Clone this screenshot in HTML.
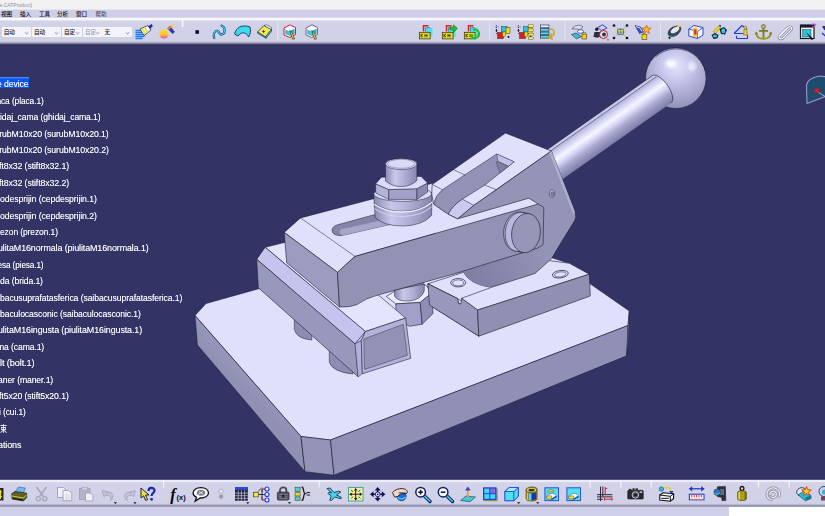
<!DOCTYPE html>
<html><head><meta charset="utf-8"><title>CATIA</title>
<style>
html,body{margin:0;padding:0;}
body{width:825px;height:516px;overflow:hidden;position:relative;background:#333366;font-family:"Liberation Sans","Noto Sans CJK SC",sans-serif;}
.abs{position:absolute;}
#title{left:0;top:0;width:825px;height:9.4px;background:#F2F2F2;}
#title span{position:absolute;left:-0.5px;top:1.8px;font-size:5px;line-height:6px;color:#8e8e98;white-space:nowrap;}
#menu{left:0;top:9px;width:825px;height:10px;background:linear-gradient(#F2F2F2 0,#E0E0EE 0.6px,#CECEE6 1.2px,#CECEE6 8.3px,#F0F2FA 9px,#FFFFFF 10px);}
#menu span{position:absolute;top:1px;font-size:5.6px;line-height:8px;color:#101020;font-weight:500;white-space:nowrap;}
#tb1{left:0;top:19px;width:825px;height:27px;background:linear-gradient(#FFFFFF 0,#F4F6FC 0.8px,#DADAEC 1.8px,#D1D1E7 3px,#D0D0E6 21.8px,#C0C0DC 22.8px,#A4A4B4 24px,#54547C 25px,#2C2C5C 26px,#333366 27px);}
.cb{position:absolute;top:27px;height:10px;background:#F3F3FA;border-radius:1px;}
.cb span{position:absolute;left:2px;top:1.5px;font-size:5.6px;line-height:7px;color:#151528;font-weight:500;white-space:nowrap;}
.cb i{position:absolute;right:2.5px;top:3.5px;width:2.2px;height:2.2px;border-right:0.6px solid #b0b0c4;border-bottom:0.6px solid #b0b0c4;transform:rotate(45deg);}
#tb2{left:0;top:479px;width:825px;height:28px;background:linear-gradient(#333366 0,#333366 0.4px,#E8E8F6 1px,#F4F4FC 2.2px,#D6D6EA 3.4px,#D2D2E8 5px,#D0D0E6 24.4px,#BCBCD4 25.4px,#9696B0 26.5px,#8A8AA8 27.3px,#D0D0E8 28px);}
#status{left:0;top:507px;width:825px;height:9px;background:#D0D0E8;}
#inp{left:729.2px;top:507.4px;width:96px;height:9px;background:#FFFFFF;}
#tree div[id]{position:absolute;left:0;white-space:nowrap;color:#fff;font-size:9.3px;line-height:12px;letter-spacing:-0.12px;text-shadow:0 0 0.5px rgba(255,255,255,0.55);}
#tree b{position:absolute;right:100%;top:0;font-weight:normal;}
svg{position:absolute;left:0;top:0;}
</style></head><body>
<svg width="825" height="516" viewBox="0 0 825 516">
<defs>
<linearGradient id="rod" x1="0" y1="0" x2="0" y2="1">
<stop offset="0" stop-color="#c4c4e8"/><stop offset="0.09" stop-color="#c8c8ec"/><stop offset="0.1" stop-color="#b4b4dc"/><stop offset="0.22" stop-color="#d0d0f2"/><stop offset="0.4" stop-color="#f6f6ff"/><stop offset="0.52" stop-color="#dcdcf8"/><stop offset="0.72" stop-color="#a8a8d0"/><stop offset="1" stop-color="#7c7ca6"/>
</linearGradient>
<radialGradient id="ball" cx="0.5" cy="0.3" r="0.78">
<stop offset="0" stop-color="#e4e4fb"/><stop offset="0.3" stop-color="#c8c8ec"/><stop offset="0.65" stop-color="#a8a8d0"/><stop offset="1" stop-color="#8686ae"/>
</radialGradient>
<linearGradient id="cylv" x1="0" y1="0" x2="1" y2="0">
<stop offset="0" stop-color="#8a8ab2"/><stop offset="0.3" stop-color="#c8c8ea"/><stop offset="0.55" stop-color="#b4b4da"/><stop offset="1" stop-color="#8686ae"/>
</linearGradient>
<linearGradient id="camlow" gradientUnits="userSpaceOnUse" x1="470" y1="285" x2="545" y2="245"><stop offset="0" stop-color="#7E7EA4"/><stop offset="0.55" stop-color="#8A8AAE"/><stop offset="1" stop-color="#9494B6"/></linearGradient>
<linearGradient id="lface" gradientUnits="userSpaceOnUse" x1="260" y1="360" x2="235" y2="385"><stop offset="0" stop-color="#9C9CC0"/><stop offset="1" stop-color="#9090B4"/></linearGradient>
<filter id="bl" x="-50%" y="-50%" width="200%" height="200%"><feGaussianBlur stdDeviation="1.6"/></filter>
</defs>
<rect x="0" y="0" width="825" height="516" fill="#333366"/>
<polygon points="195.0,315.5 206.0,303.5 500.0,221.0 629.3,311.0 628.0,325.5 330.5,440.0 301.0,436.5" fill="#E0E0FD" stroke="#1c1c30" stroke-width="0.6" stroke-linejoin="round" />
<polygon points="195.0,315.5 301.0,436.5 305.0,471.7 197.4,345.0" fill="url(#lface)" stroke="#1c1c30" stroke-width="0.6" stroke-linejoin="round" />
<polygon points="301.0,436.5 330.5,440.0 334.0,475.2 305.0,471.7" fill="#9494B8" stroke="#1c1c30" stroke-width="0.6" stroke-linejoin="round" />
<polygon points="330.5,440.0 628.0,325.5 626.7,355.8 334.0,475.2" fill="#9090B6" stroke="#1c1c30" stroke-width="0.6" stroke-linejoin="round" />
<polygon points="629.3,311.0 628.0,325.5 626.7,355.8 628.3,340.0" fill="#8A8AB2" stroke="#1c1c30" stroke-width="0.4" stroke-linejoin="round" />
<polygon points="427.9,283.8 462.8,272.5 549.3,257.0 569.4,263.3 589.4,275.1 477.6,310.8 457.5,298.6" fill="#E0E0FD" stroke="#1c1c30" stroke-width="0.6" stroke-linejoin="round" />
<polygon points="427.9,283.8 457.5,298.6 458.7,303.9 461.0,303.9 478.8,336.2 429.5,305.0" fill="#9898BC" stroke="#1c1c30" stroke-width="0.6" stroke-linejoin="round" />
<ellipse cx="458.2" cy="282.7" rx="7.5" ry="4.2" fill="none" stroke="#1c1c30" stroke-width="0.7"/>
<ellipse cx="458.2" cy="282.9" rx="5.6" ry="3.0" fill="none" stroke="#1c1c30" stroke-width="0.5"/>
<polygon points="394.4,285.0 424.2,280.0 424.2,300.0 394.4,303.0" fill="url(#cylv)" stroke="none" stroke-width="0.6" stroke-linejoin="round" />
<polygon points="386.3,296.4 395.8,303.9 420.2,302.5 431.7,293.0 425.6,284.9 400.0,288.0" fill="#ECECFF" stroke="#1c1c30" stroke-width="0.6" stroke-linejoin="round" />
<path d="M394.5,296 Q397,301.5 409,301 Q421,300 424.3,291 L424.3,284 L394.5,290 Z" fill="url(#cylv)" stroke="#1c1c30" stroke-width="0.5"/>
<polygon points="395.8,303.9 420.2,302.5 422.2,324.2 409.3,326.3 396.0,318.0" fill="#A0A0C8" stroke="#1c1c30" stroke-width="0.6" stroke-linejoin="round" />
<polygon points="420.2,302.5 431.7,293.0 433.0,313.4 422.2,324.2" fill="#8E8EB6" stroke="#1c1c30" stroke-width="0.6" stroke-linejoin="round" />
<path d="M294.3,316 L294.3,329.5 Q297,339 311.8,340 L311.8,330 Z" fill="#8C8CB4" stroke="#1c1c30" stroke-width="0.5"/>
<path d="M329.3,350 L329.3,362.4 Q333,372 353,374 L353,368 Z" fill="#8C8CB4" stroke="#1c1c30" stroke-width="0.5"/>
<polygon points="265.2,247.3 309.3,236.2 405.6,318.1 365.4,331.5" fill="#E4E4FE" stroke="#1c1c30" stroke-width="0.6" stroke-linejoin="round" />
<polygon points="256.7,259.3 265.2,247.3 365.4,331.5 355.1,343.9" fill="#C4C4EE" stroke="#1c1c30" stroke-width="0.6" stroke-linejoin="round" />
<polygon points="256.7,259.3 355.1,343.9 358.2,376.8 258.3,287.7" fill="#9898BC" stroke="#1c1c30" stroke-width="0.6" stroke-linejoin="round" />
<polygon points="355.1,343.9 365.4,331.5 361.3,340.5" fill="#C4C4EA" stroke="#1c1c30" stroke-width="0.4" stroke-linejoin="round" />
<polygon points="355.1,343.9 361.3,340.5 362.3,373.8 358.2,376.8" fill="#B0B0D8" stroke="#1c1c30" stroke-width="0.4" stroke-linejoin="round" />
<polygon points="365.4,331.5 405.6,318.1 410.7,358.3 362.3,373.8 361.3,340.5" fill="#B2B2DA" stroke="#1c1c30" stroke-width="0.6" stroke-linejoin="round" />
<polygon points="363.8,339.0 403.3,324.3 407.3,355.3 364.5,369.5" fill="#9292B4" stroke="#1c1c30" stroke-width="0.4" stroke-linejoin="round" />
<circle cx="675.8" cy="78.2" r="30.3" fill="url(#ball)" stroke="#1c1c30" stroke-width="0.6"/>
<path d="M655.7,57 A30.3,30.3 0 0 1 705.5,71.5" fill="none" stroke="#1c1c30" stroke-width="0.5"/>
<ellipse cx="671" cy="63.5" rx="5.5" ry="4" fill="#ffffff" opacity="0.85" filter="url(#bl)"/>
<ellipse cx="692" cy="66.5" rx="4" ry="5" fill="#ffffff" opacity="0.6" filter="url(#bl)"/>
<g transform="translate(557.5,163.3) rotate(-35.1)"><path d="M-6,-17.2 L127.8,-17.2 A7,16.6 0 0 1 128,16 L-6,16 Z" fill="url(#rod)"/><path d="M-6,-17.2 L127.8,-17.2 A7,16.6 0 0 1 128,16" fill="none" stroke="#1c1c30" stroke-width="0.55"/><path d="M-6,-14.1 L130.5,-14.1" fill="none" stroke="#34344c" stroke-width="0.5"/></g>
<polygon points="284.2,232.4 300.5,217.9 432.2,183.3 528.8,198.2 538.3,204.0 355.0,256.4 337.5,272.3" fill="#E0E0FD" stroke="#1c1c30" stroke-width="0.6" stroke-linejoin="round" />
<polyline points="300.5,217.9 355.0,256.4" fill="none" stroke="#1c1c30" stroke-width="0.5" stroke-linejoin="round" stroke-linecap="round"/>
<polygon points="284.2,232.4 337.5,272.3 339.5,307.0 286.7,262.7" fill="#9C9CC0" stroke="#1c1c30" stroke-width="0.6" stroke-linejoin="round" />
<path d="M336.8,225 L376.8,214 L392,224 L342,235.5 Q333,236 332,231 Q332,226.5 336.8,225 Z" fill="#8484A8" stroke="#1c1c30" stroke-width="0.5"/>
<path d="M342,235.5 L392,224 L385,219.5 L340.5,229.5 Q338,232 342,235.5 Z" fill="#A6A6CA" stroke="none"/>
<path d="M505.5,133.1 L551.4,151 L496.3,189.7 L473.9,205.3 Q466,212 457.6,218.9 L448.1,214.2 L433.6,204 Q430.5,194 432.2,184.4 Z" fill="#E0E0FD" stroke="#1c1c30" stroke-width="0.6"/>
<path d="M496.7,154.1 L514.2,161.8 L484.8,185 L462.4,199.2 Q453,205 448.1,214.2 L433.6,204 Q435,196 442.4,189.8 L464.7,174.9 Z" fill="#9292B6" stroke="#1c1c30" stroke-width="0.5"/>
<polygon points="496.7,154.1 514.2,161.8 508.5,166.3 498.0,161.5" fill="#C2C2E8" stroke="#1c1c30" stroke-width="0.4" stroke-linejoin="round" />
<polygon points="496.0,162.0 498.0,161.5 508.5,166.3 500.0,173.0" fill="#7C7CA4" stroke="#1c1c30" stroke-width="0.3" stroke-linejoin="round" />
<path d="M462.4,199.2 L473.9,205.3 Q466,212 457.6,218.9 L448.1,214.2 Q453,205 462.4,199.2 Z" fill="#CACAF0" stroke="#1c1c30" stroke-width="0.5"/>
<polyline points="453.2,169.5 464.7,174.9" fill="none" stroke="#1c1c30" stroke-width="0.5" stroke-linejoin="round" stroke-linecap="round"/>
<polyline points="432.2,184.4 442.4,189.8" fill="none" stroke="#1c1c30" stroke-width="0.5" stroke-linejoin="round" stroke-linecap="round"/>
<polyline points="484.8,185.0 496.3,189.7" fill="none" stroke="#1c1c30" stroke-width="0.5" stroke-linejoin="round" stroke-linecap="round"/>
<path d="M551.4,151 L575,212 Q576.5,216.5 575,220 L549,262.2 L536,276 L489.2,287 Q470,284 463.7,272.4 L457.6,218.9 Q466,212 473.9,205.3 L496.3,189.7 Z" fill="#9494B6" stroke="#1c1c30" stroke-width="0.6"/>
<path d="M463.7,272.4 Q470,284 489.2,287 L536,276 L549,262.2 L560,243 L543,244.5 L537.7,248.1 L450,275.1 Z" fill="url(#camlow)" stroke="none"/>
<polygon points="551.4,151.0 575.0,212.0 573.3,214.5 549.3,153.0" fill="#AEAED0" stroke="none" stroke-width="0.6" stroke-linejoin="round" />
<ellipse cx="552" cy="193.6" rx="2.8" ry="3.8" fill="#C0C0E6" stroke="#1c1c30" stroke-width="0.5" transform="rotate(10 552 193.6)"/>
<ellipse cx="552.3" cy="193.9" rx="1.5" ry="2.2" fill="#8888B0" stroke="#1c1c30" stroke-width="0.4" transform="rotate(10 552.3 193.9)"/>
<polygon points="461.5,298.3 491.6,287.3 535.0,273.5 549.3,260.6 569.4,263.3 589.4,274.2 477.6,310.0" fill="#E0E0FD" stroke="#1c1c30" stroke-width="0.6" stroke-linejoin="round" />
<polygon points="427.9,283.8 457.5,298.6 458.7,303.9 461.0,303.9 461.5,298.3 477.6,310.0 478.8,336.2 429.5,305.0" fill="#9898BC" stroke="#1c1c30" stroke-width="0.6" stroke-linejoin="round" />
<polygon points="477.6,310.0 589.4,274.2 590.3,296.0 478.8,336.2" fill="#9090B2" stroke="#1c1c30" stroke-width="0.6" stroke-linejoin="round" />
<ellipse cx="560.3" cy="274.2" rx="8" ry="3.7" fill="none" stroke="#1c1c30" stroke-width="0.7" transform="rotate(-8 560.3 274.2)"/>
<ellipse cx="560.3" cy="274.4" rx="5.8" ry="2.5" fill="none" stroke="#1c1c30" stroke-width="0.5" transform="rotate(-8 560.3 274.4)"/>
<polygon points="448.1,214.2 457.6,218.9 528.8,198.2 538.3,204.0 436.0,233.7 436.0,210.0" fill="#E0E0FD" stroke="none" stroke-width="0.6" stroke-linejoin="round" />
<polyline points="448.1,214.2 457.6,218.9 528.8,198.2 538.3,204.0" fill="none" stroke="#1c1c30" stroke-width="0.6" stroke-linejoin="round" stroke-linecap="round"/>
<path d="M337.5,272.3 L355,256.4 L538.3,204 L543.8,207.4 L543.1,244.7 L537.7,248.1 L450,275.1 L378,295 Q366,298 357,304.5 Q350,307.5 339.5,307 Z" fill="#9292B4" stroke="#1c1c30" stroke-width="0.6"/>
<g transform="rotate(8 522 232)"><path d="M518,212.5 A14.3,19.7 0 0 0 518,251.9 L526.1,252.2 L526.1,212.8 Z" fill="#C0C0E4" stroke="#1c1c30" stroke-width="0.6"/><ellipse cx="519.5" cy="232.3" rx="14.3" ry="19.7" fill="#B8B8DE" stroke="#1c1c30" stroke-width="0.6"/><ellipse cx="526.1" cy="232.5" rx="14.3" ry="19.7" fill="#9696B8" stroke="#1c1c30" stroke-width="0.6"/></g>
<path d="M374.2,204 L375.2,217.5 Q384,226.2 403,226 Q422,225.8 431.6,215.5 L431.8,202.5 Z" fill="url(#cylv)" stroke="#1c1c30" stroke-width="0.5"/>
<path d="M373.8,194.5 L374.2,203.5 Q386,211.5 403,211.3 Q421,211 431.8,201.5 L431.6,192.5 Z" fill="url(#cylv)" stroke="#1c1c30" stroke-width="0.5"/>
<path d="M374.2,204.2 Q386,212.3 403,212 Q421,211.6 431.8,202.2" fill="none" stroke="#ECECFC" stroke-width="1.3"/>
<path d="M374.4,208.6 Q386,216.8 403,216.5 Q421,216 431.7,206.8" fill="none" stroke="#D8D8F4" stroke-width="0.9"/>
<ellipse cx="402.7" cy="193.8" rx="28.9" ry="7.6" fill="#D8D8F8" stroke="#1c1c30" stroke-width="0.5"/>
<polygon points="375.7,183.8 388.8,189.6 388.8,199.4 375.7,192.9" fill="#B4B4DA" stroke="#1c1c30" stroke-width="0.5" stroke-linejoin="round" />
<polygon points="388.8,189.6 416.9,188.7 416.9,199.4 388.8,199.4" fill="#A2A2C8" stroke="#1c1c30" stroke-width="0.5" stroke-linejoin="round" />
<polygon points="416.9,188.7 427.6,183.0 427.6,192.0 416.9,199.4" fill="#8A8AAE" stroke="#1c1c30" stroke-width="0.5" stroke-linejoin="round" />
<polygon points="375.7,183.8 381.4,177.2 421.0,176.4 427.6,183.0 416.9,188.7 388.8,189.6" fill="#DCDCFA" stroke="#1c1c30" stroke-width="0.5" stroke-linejoin="round" />
<path d="M385.5,164 L385.5,181 Q392,186.5 401.2,186.5 Q411,186.5 416.9,180.5 L416.9,164 Z" fill="url(#cylv)" stroke="#1c1c30" stroke-width="0.5"/>
<ellipse cx="401.2" cy="164" rx="15.7" ry="5.6" fill="#DADAF8" stroke="#1c1c30" stroke-width="0.5"/>
<ellipse cx="401.2" cy="163.8" rx="13.6" ry="4.5" fill="none" stroke="#1c1c30" stroke-width="0.3"/>
<path d="M807,103.6 L806.5,85 Q808,78 820,76 L826,76.8 L826,96.3 Z" fill="#1F4C6C" stroke="#9A9AC8" stroke-width="1.1" stroke-linejoin="round"/>
<path d="M818.5,92.5 L826,97" stroke="#B8B8DC" stroke-width="0.9"/>
<rect x="814.6" y="88.5" width="4.1" height="4.1" fill="#f01020"/>
</svg>
<div class="abs" id="title"><span>e.CATProduct]</span></div>
<div class="abs" id="menu"><span style="left:1px">视图</span><span style="left:20px">插入</span><span style="left:39px">工具</span><span style="left:57px">分析</span><span style="left:76px">窗口</span><span style="left:95.5px;color:#555568">帮助</span></div>
<div class="abs" id="tb1"></div>
<div class="cb" style="left:1.7px;width:29.3px"><span style="">自动</span><i></i></div><div class="cb" style="left:32px;width:28.5px"><span style="">自动</span><i></i></div><div class="cb" style="left:62px;width:20px"><span style="">自定</span><i></i></div><div class="cb" style="left:83px;width:19px"><span style="color:#9a9ab0">自定</span><i></i></div><div class="cb" style="left:102.4px;width:29.6px"><span style="">无</span><i></i></div>
<div class="abs" id="tb2"></div>
<div class="abs" id="status"></div>
<div class="abs" id="inp"></div>
<svg width="825" height="516" viewBox="0 0 825 516">
<g transform="translate(135,24) scale(1.0)"><path d="M0.5,6.5h9M0.5,8.5h10M0.5,10.5h10M0.5,12.5h9M0.5,14.5h7" stroke="#2080f0" stroke-width="1.3"/>
<path d="M5,5 L13,1.5 L16,6 L9,11.5 Z" fill="#f8f8ff" stroke="#181830" stroke-width="0.7"/>
<path d="M7.2,4.6 L10.3,9.8 M9.6,3.4 L12.6,8.3" stroke="#e8e020" stroke-width="1.6"/>
<path d="M13.5,2.5 L16.5,0.3 L17.6,2.2 L15,4.6 Z" fill="#1030d0" stroke="#10103c" stroke-width="0.4"/></g>
<g transform="translate(159,24) scale(1.0)"><defs><linearGradient id="sp" x1="0" y1="0" x2="0" y2="1"><stop offset="0" stop-color="#ffe040"/><stop offset="0.6" stop-color="#ffc020"/><stop offset="1" stop-color="#e040e0"/></linearGradient></defs>
<circle cx="5" cy="10" r="4.6" fill="url(#sp)"/>
<path d="M8.5,4.5 L11,2 L15.5,8 L13.5,9.6 Z" fill="#2038c8" stroke="#10103c" stroke-width="0.4"/>
<path d="M8.5,4.5 L11,2 L12.2,3.5 L9.8,6 Z" fill="#f08030"/>
<path d="M11,1.8 L13.6,0.2 L14.8,2.2 L12.3,3.4 Z" fill="#f8d020"/></g>
<rect x="181.8" y="19" width="1.6" height="8" fill="#f6f6fc"/>
<rect x="195.4" y="30.2" width="3.6" height="3.6" fill="#10103c"/>
<g transform="translate(213,24.5) scale(1.0)"><path d="M1.2,13.5 C-0.5,7 4.5,4.5 6,8 C7.5,11.5 12,10 11.6,5.5 C11.4,3 10,1.6 8.6,1.2" fill="none" stroke="#183878" stroke-width="2.2" stroke-linecap="round"/>
<path d="M1.2,13.5 C-0.5,7 4.5,4.5 6,8 C7.5,11.5 12,10 11.6,5.5 C11.4,3 10,1.6 8.6,1.2" fill="none" stroke="#38d8f0" stroke-width="1.1" stroke-linecap="round"/></g>
<g transform="translate(234,24.5) scale(1.0)"><path d="M0.6,9.5 C2,3 8,-0.5 16,2.5 C17,6 16.5,9.5 14.5,12.5 C13,8.5 8,6 4,11.5 Z" fill="#38dcec" stroke="#183060" stroke-width="0.9" stroke-linejoin="round"/></g>
<g transform="translate(257,24.5) scale(1.0)"><path d="M0.5,7.5 L7,1 L14.5,5 L8.5,12.5 Z" fill="#f0e850" stroke="#202030" stroke-width="0.7"/>
<path d="M7,1 L9.5,0.3 L14.5,3 L14.5,5 Z" fill="#f8f8ff" stroke="#202030" stroke-width="0.5"/>
<path d="M8.5,12.5 L14.5,5 L14.5,7 L9,13.8 Z" fill="#30c8d8" stroke="#202030" stroke-width="0.5"/>
<path d="M0.5,7.5 L8.5,12.5 L9,13.8 L0.8,9 Z" fill="#30c8d8" stroke="#202030" stroke-width="0.5"/>
<path d="M5,7 h3 M6.5,5.5 v3" stroke="#202030" stroke-width="0.7"/></g>
<line x1="277" y1="22" x2="277" y2="40" stroke="#c6c6dc" stroke-width="0.5"/><line x1="277.8" y1="22" x2="277.8" y2="40" stroke="#f0f0fa" stroke-width="0.8"/>
<g transform="translate(283,24) scale(1.0)"><path d="M1,4 L7,0.8 L12.5,3.5 L12.5,10.5 L6.5,13.5 L1,11 Z" fill="#f4f4fc" stroke="#d02030" stroke-width="1"/>
<path d="M2.2,5.5 L6.5,7.3 L6.5,12 L2.2,10 Z" fill="#30c8d8"/><path d="M6.5,7.3 L11.5,4.8 L11.5,9.5 L6.5,12 Z" fill="#28a8c0"/>
<path d="M6.8,6.5 L9.5,9 L11.5,15 L9.5,15.2 L8,10.5 Z" fill="#f0d040" stroke="#202030" stroke-width="0.6"/></g>
<g transform="translate(305,24) scale(1.0)"><path d="M1,4 L7,0.8 L12.5,3.5 L12.5,10.5 L6.5,13.5 L1,11 Z" fill="#f4f4fc" stroke="#806070" stroke-width="1"/>
<path d="M2.2,5.5 L6.5,7.3 L6.5,12 L2.2,10 Z" fill="#30c8d8"/><path d="M6.5,7.3 L11.5,4.8 L11.5,9.5 L6.5,12 Z" fill="#28a8c0"/>
<path d="M6.8,6.5 L9.5,9 L11.5,15 L9.5,15.2 L8,10.5 Z" fill="#f0d040" stroke="#202030" stroke-width="0.6"/></g>
<g transform="translate(419,24.5) scale(1.0)"><path d="M4.5,7 V1.2 H9.5" fill="none" stroke="#e02020" stroke-width="1.5"/>
<rect x="6.5" y="3.2" width="7" height="9" fill="#50e0f0"/><path d="M6.5,7 V3.2 H11" fill="none" stroke="#207080" stroke-width="0.7"/>
<rect x="0.3" y="7.8" width="10.8" height="6.6" fill="#e8d820" stroke="#303010" stroke-width="0.7"/>
<path d="M2,9.5 v3.2 M2,11 l2,-1.5 M2,11 l2,1.7 M6,9.5 v3.2 M8,9.5 v3.2 M6,11 h2" stroke="#303010" stroke-width="0.8" fill="none"/></g>
<g transform="translate(442,24.5) scale(1.0)"><path d="M4.5,7 V1.2 H9.5" fill="none" stroke="#e02020" stroke-width="1.5"/>
<rect x="6.5" y="3.2" width="7" height="9" fill="#50e0f0"/><path d="M6.5,7 V3.2 H11" fill="none" stroke="#207080" stroke-width="0.7"/>
<rect x="0.3" y="7.8" width="10.8" height="6.6" fill="#e8d820" stroke="#303010" stroke-width="0.7"/>
<path d="M2,9.5 v3.2 M2,11 l2,-1.5 M2,11 l2,1.7 M6,9.5 v3.2 M8,9.5 v3.2 M6,11 h2" stroke="#303010" stroke-width="0.8" fill="none"/><path d="M8,2.5 h3.5 v-2.2 l4,3.8 l-4,3.8 v-2.4 h-3.5 Z" fill="#20c030" stroke="#106018" stroke-width="0.5"/></g>
<g transform="translate(464,24.5) scale(1.0)"><path d="M4.5,7 V1.2 H9.5" fill="none" stroke="#e02020" stroke-width="1.5"/>
<rect x="6.5" y="3.2" width="7" height="9" fill="#50e0f0"/><path d="M6.5,7 V3.2 H11" fill="none" stroke="#207080" stroke-width="0.7"/>
<rect x="0.3" y="7.8" width="10.8" height="6.6" fill="#e8d820" stroke="#303010" stroke-width="0.7"/>
<path d="M2,9.5 v3.2 M2,11 l2,-1.5 M2,11 l2,1.7 M6,9.5 v3.2 M8,9.5 v3.2 M6,11 h2" stroke="#303010" stroke-width="0.8" fill="none"/><path d="M9,5.5 a4.2,4.2 0 1 1 -1.5,6.5" fill="none" stroke="#20c030" stroke-width="2.2"/><path d="M5.5,11 l4,-1 l-1,4 Z" fill="#20c030"/></g>
<line x1="488.5" y1="22" x2="488.5" y2="40" stroke="#c6c6dc" stroke-width="0.5"/><line x1="489.3" y1="22" x2="489.3" y2="40" stroke="#f0f0fa" stroke-width="0.8"/>
<g transform="translate(495.5,24) scale(1.0)"><path d="M1,1 v9 M0,3 h3" stroke="#202040" stroke-width="0.7" stroke-dasharray="1 1"/>
<rect x="6" y="2.5" width="5.5" height="5.5" fill="#30c0e0" stroke="#104060" stroke-width="0.5"/>
<rect x="10.5" y="3.5" width="4" height="6" fill="#e8d820" stroke="#504010" stroke-width="0.5"/>
<rect x="2" y="8.5" width="6" height="6" fill="#d02020" stroke="#601010" stroke-width="0.5"/>
<rect x="7" y="8" width="3.2" height="4.5" fill="#e8d820" stroke="#504010" stroke-width="0.4"/>
<circle cx="1" cy="6.5" r="0.9" fill="#101030"/><circle cx="13" cy="13" r="1" fill="#101030"/></g>
<g transform="translate(517.5,24) scale(1.0)"><path d="M1,1 v9 M0,3 h3" stroke="#202040" stroke-width="0.7" stroke-dasharray="1 1"/>
<rect x="6" y="2.5" width="5.5" height="5.5" fill="#30c0e0" stroke="#104060" stroke-width="0.5"/>
<rect x="10.5" y="3.5" width="4" height="6" fill="#e8d820" stroke="#504010" stroke-width="0.5"/>
<rect x="2" y="8.5" width="6" height="6" fill="#d02020" stroke="#601010" stroke-width="0.5"/>
<rect x="7" y="8" width="3.2" height="4.5" fill="#e8d820" stroke="#504010" stroke-width="0.4"/>
<circle cx="1" cy="6.5" r="0.9" fill="#101030"/><circle cx="13" cy="13" r="1" fill="#101030"/><rect x="11" y="0.8" width="5" height="2.4" fill="#f0e870" stroke="#605010" stroke-width="0.4"/><rect x="11" y="5" width="5" height="2.4" fill="#f0e870" stroke="#605010" stroke-width="0.4"/><rect x="11" y="9.2" width="5" height="2.4" fill="#f0e870" stroke="#605010" stroke-width="0.4"/><rect x="11" y="13" width="5" height="2.2" fill="#f0e870" stroke="#605010" stroke-width="0.4"/></g>
<g transform="translate(540,24.5) scale(1.0)"><rect x="0.5" y="0.5" width="8.5" height="2.6" fill="#f4f4fc" stroke="#202040" stroke-width="0.6"/>
<rect x="0.5" y="4" width="8.5" height="2.6" fill="#50d8e8" stroke="#202040" stroke-width="0.6"/>
<rect x="0.5" y="7.5" width="8.5" height="2.6" fill="#50d8e8" stroke="#202040" stroke-width="0.6"/>
<rect x="0.5" y="11" width="8.5" height="2.6" fill="#50d8e8" stroke="#202040" stroke-width="0.6"/>
<path d="M10,4.5 c5,0 6,5.5 1,7.5 l0.3,-2 l-3,2.6 l3.6,1.8 l-0.3,-1.6" fill="none" stroke="#c8a818" stroke-width="1.5"/></g>
<line x1="564" y1="22" x2="564" y2="40" stroke="#c6c6dc" stroke-width="0.5"/><line x1="564.8" y1="22" x2="564.8" y2="40" stroke="#f0f0fa" stroke-width="0.8"/>
<g transform="translate(571,24) scale(1.0)"><path d="M1,5 C3,1 9,0 12,3 L8.5,6 C6,4.5 4,5 1,5 Z" fill="#d8d8e8" stroke="#404060" stroke-width="0.6"/>
<ellipse cx="9.5" cy="7.5" rx="3" ry="1.8" fill="#f8f8ff" stroke="#2040d0" stroke-width="0.8"/>
<path d="M0.5,10.5 L5,9 L10.5,12.5 L5.5,14.8 Z" fill="#40b8d8" stroke="#203050" stroke-width="0.6"/>
<rect x="11" y="10" width="4.6" height="5" fill="#e8d820" stroke="#504010" stroke-width="0.6"/><rect x="12" y="8.6" width="2.6" height="1.6" fill="#e8d820" stroke="#504010" stroke-width="0.4"/></g>
<g transform="translate(593.5,24) scale(1.0)"><path d="M4,3.5 L9,0.8 L13.5,4 L8,6.5 Z" fill="none" stroke="#2038d8" stroke-width="0.9"/>
<circle cx="3.2" cy="5.2" r="1.7" fill="#202030"/><path d="M1,8 h6 l1,5 h-8 Z" fill="#202030"/><circle cx="3.5" cy="11" r="2.8" fill="#303040"/>
<circle cx="10" cy="10.5" r="4" fill="#e8e8f4" stroke="#c01818" stroke-width="1"/><circle cx="10.5" cy="10.5" r="2" fill="#303050"/>
<path d="M13.5,15.5 h2 l-1,1.2 Z" fill="#101020"/></g>
<g transform="translate(612.5,24) scale(1.0)"><path d="M1.5,1.5 L14.5,14 M14.5,1.5 L1.5,14" stroke="#d8c818" stroke-width="1"/>
<circle cx="1.5" cy="1.5" r="1.3" fill="#101020"/><circle cx="14.5" cy="1.5" r="1.3" fill="#101020"/><circle cx="1.5" cy="14" r="1.3" fill="#101020"/><circle cx="14.5" cy="14" r="1.3" fill="#101020"/>
<rect x="5" y="5" width="6.2" height="5.6" rx="1.5" fill="#3088d0" stroke="#203050" stroke-width="0.5"/><circle cx="6.8" cy="6.8" r="1.2" fill="#e8d820"/><circle cx="9.6" cy="6.8" r="1.2" fill="#e8d820"/><circle cx="6.8" cy="9.2" r="1" fill="#e8d820"/><circle cx="9.6" cy="9.2" r="1" fill="#e8d820"/></g>
<g transform="translate(634.5,24) scale(1.0)"><path d="M0.5,1.5 L6,3 L9,8 L5,9.5 Z" fill="#2850d8" stroke="#202040" stroke-width="0.5"/><path d="M1.5,2.5 L5.5,4 L7.5,7.5" stroke="#f0f0ff" stroke-width="0.9" fill="none"/>
<path d="M12,1 l1.2,3 l3.3,0.2 l-2.6,2 l1,3.3 l-2.9,-1.9 l-2.9,1.9 l1,-3.3 l-2.6,-2 l3.3,-0.2 Z" fill="#f8c020" stroke="#e05818" stroke-width="0.8"/>
<rect x="7.5" y="10.5" width="4.8" height="4.8" fill="#e8d820" stroke="#504010" stroke-width="0.6"/><rect x="8.6" y="9.2" width="2.6" height="1.5" fill="#e8d820" stroke="#504010" stroke-width="0.4"/></g>
<line x1="659.5" y1="22" x2="659.5" y2="40" stroke="#c6c6dc" stroke-width="0.5"/><line x1="660.3" y1="22" x2="660.3" y2="40" stroke="#f0f0fa" stroke-width="0.8"/>
<g transform="translate(667,24) scale(1.0)"><ellipse cx="7.5" cy="7" rx="7.5" ry="4.6" transform="rotate(-32 7.5 7)" fill="#404858" />
<ellipse cx="8" cy="6" rx="5.2" ry="2.8" transform="rotate(-32 8 6)" fill="#e8e8f4" stroke="#202030" stroke-width="0.5"/>
<path d="M1,9.5 C2,14 8,13.5 12,9 C9,12 4,12.5 1,9.5 Z" fill="#20a0a0" stroke="#104848" stroke-width="0.6"/>
<circle cx="11.5" cy="2.2" r="1.3" fill="#f0e020"/><circle cx="2.5" cy="13.8" r="1.1" fill="#101020"/></g>
<g transform="translate(688,24) scale(1.0)"><path d="M0.8,5 L6,1.5 L15,3.5 L15,11 L9.5,14.5 L0.8,12 Z" fill="#f4f4fc" stroke="#2038c0" stroke-width="0.9"/>
<path d="M0.8,5 L9.5,7.5 L9.5,14.5 M9.5,7.5 L15,3.5" fill="none" stroke="#2038c0" stroke-width="0.8"/>
<rect x="5.2" y="3.8" width="4.2" height="8.8" fill="#f0c020"/><rect x="6.2" y="5.5" width="2.2" height="5" fill="#e02828"/></g>
<g transform="translate(711,24.5) scale(1.0)"><path d="M2,7 L8,1 L10,2.5 L4.5,9 Z" fill="#e8d820" stroke="#605010" stroke-width="0.4"/>
<path d="M8.5,4.5 L13,2.5 L16,5.5 L14,10 L10,9.5 Z" fill="#181828"/><ellipse cx="12.3" cy="6.3" rx="2" ry="2.6" fill="#30c8e0"/>
<path d="M0.5,10.5 L4,8.5 L7.5,10.5 L6.5,13.8 L2.5,14.5 Z" fill="#181828"/><ellipse cx="4" cy="11.5" rx="2.2" ry="1.6" fill="#30c8e0"/>
<circle cx="9" cy="1.2" r="1" fill="#2040d0"/></g>
<g transform="translate(733,24) scale(1.0)"><path d="M1,9.5 L9,1.5 L14,5.5 M1,9.5 L10.5,9.5 M3.5,14.5 h11 M3.5,11.8 v2.7 M14.5,11 v3.5" fill="none" stroke="#2038e0" stroke-width="1.1"/>
<circle cx="12.3" cy="3.6" r="1.5" fill="#e8d020" stroke="#504010" stroke-width="0.4"/><path d="M11,5.5 h2.8 l0.4,5.5 h-3.6 Z" fill="#e8d020" stroke="#504010" stroke-width="0.4"/></g>
<g transform="translate(755,24) scale(1.0)"><circle cx="8.5" cy="2.6" r="1.8" fill="none" stroke="#807818" stroke-width="1.2"/>
<path d="M8.5,4.5 V14 M4,6.8 h9" stroke="#807818" stroke-width="1.8"/>
<path d="M1,8.5 C1.5,14 6,15 8.5,14.5 C11,15 15.5,14 16,8.5" fill="none" stroke="#a09820" stroke-width="2"/>
<path d="M0,10.5 l1,-3 l2,2.3 Z M17,10.5 l-1,-3 l-2,2.3 Z" fill="#807818"/></g>
<g transform="translate(777,24) scale(1.0)"><path d="M2.5,12 L11,3.5 C13,1.5 16,4 14,6.2 L6,14 C3.5,16.3 0.3,13.5 2.8,11 L9.5,4.5" fill="none" stroke="#707088" stroke-width="2.4" stroke-linecap="round"/>
<path d="M2.5,12 L11,3.5 C13,1.5 16,4 14,6.2 L6,14 C3.5,16.3 0.3,13.5 2.8,11 L9.5,4.5" fill="none" stroke="#f8f8ff" stroke-width="1.2" stroke-linecap="round"/></g>
<g transform="translate(800,24) scale(1.0)"><rect x="0.5" y="1" width="13.5" height="13.5" fill="#f4f4fc" stroke="#181828" stroke-width="1.2"/><rect x="0.5" y="1" width="13.5" height="2.6" fill="#181828"/>
<rect x="2.5" y="5.5" width="8.5" height="7.5" fill="#30c0d0" stroke="#104858" stroke-width="0.5"/>
<path d="M6,8 L12.5,14 L13,15.8 L11,15.5 Z" fill="#181828"/><path d="M11,0.5 l3.5,-1 M12,2.6 l3.2,0.3" stroke="#e050d0" stroke-width="0.9"/><circle cx="15.2" cy="0.8" r="1" fill="#e050d0"/></g>
<g transform="translate(821.5,24) scale(1.0)"><path d="M1,3 C3,2 4,4 3,6 M0.5,9 L4,12" stroke="#2838c8" stroke-width="1.4" fill="none"/><circle cx="3" cy="3.5" r="1.6" fill="#303048"/></g>
<g transform="translate(0,487) scale(1.0)"><rect x="-3" y="1" width="6.5" height="12.5" fill="#282838"/><path d="M0.5,3 v9 M-1,5 h3 M-1,9.5 h3" stroke="#e8e020" stroke-width="1.2"/></g>
<g transform="translate(11,486.5) scale(1.0)"><path d="M4,5.5 L7.5,0.5 L14.5,1.5 L12,7 Z" fill="#70b8f0" stroke="#304878" stroke-width="0.5"/><path d="M0.8,7 L4,5 L15.5,6.5 L15.8,11 L12.5,14.5 L1,12.5 Z" fill="#606028" stroke="#181810" stroke-width="0.6"/><path d="M1,9.5 L12.5,11.5 L15.8,8.2" fill="none" stroke="#c8c850" stroke-width="1"/><path d="M2,12 L12,13.6" stroke="#181810" stroke-width="1.2"/></g>
<g transform="translate(35.5,486.5) scale(1.0)"><path d="M1,0.5 L8,10 M11,0.5 L4,10" stroke="#a4a4bc" stroke-width="1.5" fill="none"/><circle cx="2.8" cy="12.3" r="2.1" fill="none" stroke="#a4a4bc" stroke-width="1.3"/><circle cx="9.3" cy="12.3" r="2.1" fill="none" stroke="#a4a4bc" stroke-width="1.3"/></g>
<g transform="translate(57,487) scale(1.0)"><path d="M0.5,0.5 h6 l2.5,2.5 v7.5 h-8.5 Z" fill="#f0f0f8" stroke="#a4a4bc" stroke-width="1"/><path d="M6,3.5 h6 l2.8,2.8 v7.5 h-8.8 Z" fill="#f0f0f8" stroke="#a4a4bc" stroke-width="1"/><path d="M8,8 h5 M8,10 h5 M8,12 h5" stroke="#c4c4d4" stroke-width="0.6"/></g>
<g transform="translate(79,487) scale(1.0)"><rect x="0.5" y="1.5" width="10.5" height="11" fill="#b4b4c8" stroke="#a4a4bc" stroke-width="1"/><rect x="3" y="0.3" width="5.5" height="2.8" fill="#d0d0e0" stroke="#a4a4bc" stroke-width="0.7"/><path d="M6.5,6 h5 l2.5,2.5 v5.5 h-7.5 Z" fill="#f0f0f8" stroke="#a4a4bc" stroke-width="1"/></g>
<g transform="translate(101.8,487) scale(1.0)"><path d="M2,9.5 L0.5,3.5 L6.5,5 L4.7,6.5 C8,4 12,6 11,10 C10.5,12 9.5,13 8.5,13.5 C9.5,11 9,8.5 6,8.5 L4,8.2 Z" fill="#c4c4d8" stroke="#a4a4bc" stroke-width="0.9"/></g>
<path d="M113.80000000000001,502.2 h3.2 l-1.6,1.8 Z" fill="#101020"/>
<g transform="translate(135.8,487) scale(1.0)"><g transform="scale(-1,1)"><path d="M2,9.5 L0.5,3.5 L6.5,5 L4.7,6.5 C8,4 12,6 11,10 C10.5,12 9.5,13 8.5,13.5 C9.5,11 9,8.5 6,8.5 L4,8.2 Z" fill="#c4c4d8" stroke="#a4a4bc" stroke-width="0.9"/></g></g>
<path d="M133.4,502.2 h3.2 l-1.6,1.8 Z" fill="#101020"/>
<g transform="translate(140,487) scale(1.0)"><path d="M1,1 L1,11 L3.6,8.8 L5.6,13.5 L7.6,12.6 L5.6,8 L9,8 Z" fill="#f0e040" stroke="#101030" stroke-width="0.9"/><path d="M8.5,4 C8.5,0 14.5,0 14.5,3.6 C14.5,6 11.6,6.2 11.6,9" fill="none" stroke="#1828a8" stroke-width="2.2"/><circle cx="11.6" cy="12.3" r="1.4" fill="#1828a8"/></g>
<rect x="163" y="480.5" width="1.2" height="7" fill="#f6f6fc"/>
<text x="170.2" y="499.5" font-family="Liberation Serif,serif" font-style="italic" font-weight="bold" font-size="16.5" fill="#08080c">f</text><text x="176.6" y="499.8" font-family="Liberation Sans,sans-serif" font-weight="bold" font-size="7.4" fill="#08080c">(x)</text>
<g transform="translate(192.7,487) scale(1.0)"><path d="M8,0.6 C13,0.6 15.8,3 15.8,6 C15.8,9.2 12,11.2 7.5,11 L2.5,14.3 L3.8,10.3 C1.5,9.3 0.4,7.8 0.4,6 C0.4,3 3.5,0.6 8,0.6 Z" fill="#f8f8ff" stroke="#101018" stroke-width="1.3"/><ellipse cx="8.3" cy="5.8" rx="4.2" ry="3" fill="#80808c"/><path d="M6,7 l4.5,-2.6 M6.4,4.6 l3.8,2.6" stroke="#f0f0f8" stroke-width="0.8"/></g>
<g transform="translate(218,488) scale(1.0)"><rect x="0.3" y="0" width="5.6" height="12" rx="2.4" fill="#d0d0e0"/><circle cx="3.1" cy="3.2" r="2" fill="#e8e8f0" stroke="#a4a4bc" stroke-width="0.7"/><circle cx="3.1" cy="8.6" r="2.2" fill="#9c9cac"/></g>
<g transform="translate(235,487.3) scale(1.0)"><rect x="0" y="0" width="12.8" height="13.4" fill="#202038"/><rect x="0" y="0" width="12.8" height="2.6" fill="#2848e0"/><path d="M3.2,3 v10.4 M6.4,3 v10.4 M9.6,3 v10.4 M0,5.8 h12.8 M0,8.4 h12.8 M0,11 h12.8" stroke="#c8c8dc" stroke-width="0.7"/></g>
<path d="M246.20000000000002,502.2 h3.2 l-1.6,1.8 Z" fill="#101020"/>
<g transform="translate(253,486.5) scale(1.0)"><path d="M5,8 h4 M9,2.5 v11 M9,2.5 h3 M9,8 h3 M9,13.5 h3" stroke="#202038" stroke-width="0.9" fill="none"/><path d="M5,5 l4,-4" stroke="#202038" stroke-width="0.8"/><rect x="0.5" y="5.8" width="4.8" height="4.6" fill="#f0e050" stroke="#504810" stroke-width="0.7"/><circle cx="14" cy="2.5" r="2" fill="#f0f0ff" stroke="#2040e0" stroke-width="1.1"/><circle cx="14" cy="8" r="2" fill="#f0f0ff" stroke="#2040e0" stroke-width="1.1"/><circle cx="14" cy="13.5" r="2" fill="#f0f0ff" stroke="#2040e0" stroke-width="1.1"/><circle cx="9" cy="4.5" r="0.9" fill="#e02020"/><circle cx="9" cy="11.5" r="0.9" fill="#e02020"/></g>
<g transform="translate(276.8,486.5) scale(1.0)"><path d="M3.2,6 V3.8 C3.2,0 9.6,0 9.6,3.8 V6" fill="none" stroke="#484858" stroke-width="1.8"/><rect x="0.6" y="5.6" width="11.6" height="8" rx="1.2" fill="#585868" stroke="#202028" stroke-width="0.7"/><path d="M2.5,8 h8 M2.5,10 h8 M2.5,12 h8" stroke="#8c8c9c" stroke-width="0.6"/><circle cx="6.4" cy="9.6" r="1.3" fill="#181820"/></g>
<path d="M287.9,502.2 h3.2 l-1.6,1.8 Z" fill="#101020"/>
<g transform="translate(294.6,486.5) scale(1.0)"><rect x="0.5" y="0.8" width="5" height="4.2" fill="#40d0e0" stroke="#606018" stroke-width="0.7"/><rect x="0.5" y="6.2" width="5" height="3.2" fill="#e8e040" stroke="#606018" stroke-width="0.7"/><rect x="0.5" y="10.4" width="5" height="3.4" fill="#40d0e0" stroke="#606018" stroke-width="0.7"/><path d="M7,0.5 C10,0.5 8,6.5 10.5,7.2 C8,8 10,14 7,14" fill="none" stroke="#181828" stroke-width="1.3"/><path d="M12,6 h3.5 M12,8.5 h3.5" stroke="#181828" stroke-width="1"/></g>
<rect x="318.6" y="480.5" width="1.2" height="7" fill="#f6f6fc"/>
<g transform="translate(326,487) scale(1.0)"><path d="M1,1.5 L4,1 L8,5.5 L12.5,4.2 L14.8,5 L10.5,8 L15.2,10.2 L15,11.8 L8.5,10 L5.5,13.5 L3.8,13.2 L5.2,8.8 L2,6.5 L3,5.2 L5.5,6 Z" fill="#40d8e8" stroke="#183060" stroke-width="0.9"/></g>
<g transform="translate(348,487) scale(1.0)"><rect x="0.4" y="0.4" width="14.6" height="13.6" fill="#f4f0a0" stroke="#30a0a0" stroke-width="0.9"/><path d="M7.7,2 v10.4 M2.2,7.2 h11" stroke="#101018" stroke-width="0.9"/><path d="M7.7,1 l-1.7,2.4 h3.4 Z M7.7,13.4 l-1.7,-2.4 h3.4 Z M1.2,7.2 l2.4,-1.7 v3.4 Z M14.2,7.2 l-2.4,-1.7 v3.4 Z" fill="#101018"/><path d="M3,2.8 l2,2 M12.4,2.8 l-2,2 M3,11.6 l2,-2 M12.4,11.6 l-2,-2" stroke="#101018" stroke-width="0.8"/></g>
<g transform="translate(370,487) scale(1.0)"><path d="M7.7,0 l-3,3.6 h6 Z M7.7,14.6 l-3,-3.6 h6 Z M0,7.3 l3.6,-3 v6 Z M15.4,7.3 l-3.6,-3 v6 Z" fill="#101060"/><path d="M7.7,3 v8.6 M3,7.3 h9.4" stroke="#101060" stroke-width="1.6"/><circle cx="7.7" cy="7.3" r="2.4" fill="#f0f0ff" stroke="#101060" stroke-width="0.9"/><circle cx="7.7" cy="7.3" r="0.9" fill="#101060"/></g>
<g transform="translate(392,487) scale(1.0)"><circle cx="9.5" cy="9.2" r="4.6" fill="#2068e0" stroke="#102060" stroke-width="0.6"/><path d="M6,10.5 C8,12.5 11.5,12.5 13.5,10" stroke="#40d8f0" stroke-width="1.3" fill="none"/><path d="M0.5,5.5 C3,2.5 8,0.8 12.5,2 C15.5,3 16,5.5 14.5,6.5 L8.5,6.8 L5.5,9.5 L2.5,10 Z" fill="#f4d8c0" stroke="#181828" stroke-width="0.9"/><path d="M6.5,5.8 h7" stroke="#181828" stroke-width="0.7"/></g>
<g transform="translate(415,486.5) scale(1.0)"><path d="M9,9 L15,15" stroke="#102060" stroke-width="3.4" stroke-linecap="round"/><path d="M9.4,9.4 L14.8,14.8" stroke="#40c8e8" stroke-width="1.5" stroke-linecap="round"/><circle cx="5.6" cy="5.7" r="4.8" fill="#f8f8ff" stroke="#102060" stroke-width="1.5"/><path d="M3.3,5.7 h4.6" stroke="#101018" stroke-width="1.5"/><path d="M5.6,3.4 v4.6" stroke="#101018" stroke-width="1.5"/></g>
<g transform="translate(437.5,486.5) scale(1.0)"><path d="M9,9 L15,15" stroke="#102060" stroke-width="3.4" stroke-linecap="round"/><path d="M9.4,9.4 L14.8,14.8" stroke="#40c8e8" stroke-width="1.5" stroke-linecap="round"/><circle cx="5.6" cy="5.7" r="4.8" fill="#f8f8ff" stroke="#102060" stroke-width="1.5"/><path d="M3.3,5.7 h4.6" stroke="#101018" stroke-width="1.5"/></g>
<g transform="translate(460,486.5) scale(1.0)"><path d="M0.5,14 L6,9.5 L15.5,10.5 L10,15.2 Z" fill="#40c8e0" stroke="#185070" stroke-width="0.7"/><path d="M7.8,12 V3.5" stroke="#e8a020" stroke-width="1.8"/><path d="M7.8,0 l-2.8,4 h5.6 Z" fill="#2848e0"/></g>
<g transform="translate(483,487.3) scale(1.0)"><rect x="0" y="0" width="13.6" height="12.8" fill="#2040d8"/><rect x="1.3" y="1.3" width="5" height="4.6" fill="#40d8f0"/><rect x="7.3" y="1.3" width="5" height="4.6" fill="#8868e0"/><rect x="1.3" y="6.9" width="5" height="4.6" fill="#40d8f0"/><rect x="7.3" y="6.9" width="5" height="4.6" fill="#40d8f0"/><path d="M0.5,13.4 h13.6 v-12" stroke="#807018" stroke-width="0.8" fill="none"/></g>
<g transform="translate(504.3,487) scale(1.0)"><path d="M0.5,4.5 L5,0.5 L14,0.5 L14,9.5 L9.5,13.8 L0.5,13.8 Z" fill="#50e0f0" stroke="#2040e0" stroke-width="1"/><path d="M0.5,4.5 H9.5 V13.8 M9.5,4.5 L14,0.5" fill="none" stroke="#2040e0" stroke-width="0.9"/><path d="M0.5,4.5 L5,0.5 L14,0.5 L9.5,4.5 Z" fill="#a0f0f8" stroke="#2040e0" stroke-width="0.8"/></g>
<path d="M517.1,502.2 h3.2 l-1.6,1.8 Z" fill="#101020"/>
<g transform="translate(525.5,486.5) scale(1.0)"><path d="M0.8,3.5 V11.5 C0.8,15.3 11.4,15.3 11.4,11.5 V3.5 Z" fill="#1830c0" stroke="#807010" stroke-width="1.4"/><rect x="3.4" y="4" width="2.6" height="10" fill="#40d8f0"/><rect x="1.4" y="4" width="1.6" height="9.4" fill="#e8d020"/><ellipse cx="6.1" cy="3.5" rx="5.3" ry="2.7" fill="#e8e0a0" stroke="#807010" stroke-width="1.4"/><ellipse cx="6.1" cy="3.7" rx="3.2" ry="1.4" fill="#383820"/></g>
<path d="M536.1999999999999,502.2 h3.2 l-1.6,1.8 Z" fill="#101020"/>
<g transform="translate(544.4,487.3) scale(1.0)"><rect x="0.5" y="0.5" width="13.6" height="12.8" fill="#50e0f0" stroke="#3050d0" stroke-width="1"/><path d="M3,4.5 C5,1.5 9,2 9.5,4.5 C7,4 5,5 3,4.5 Z" fill="#f0e050" stroke="#605010" stroke-width="0.5"/><path d="M2,10 C3,6.5 8,5 10.5,7 L12,8.5 L7,11.8 Z" fill="#f8f8ff" stroke="#404060" stroke-width="0.5"/><path d="M2,10 C3.5,8 6,8 7.5,9 L7,11.8 L3,11.8 Z" fill="#f0d040" stroke="#605010" stroke-width="0.5"/><path d="M7,11.8 L12,8.5 L12.4,9.6 L7.5,12.8 Z" fill="#2040a0"/></g>
<g transform="translate(566.4,487.3) scale(1.0)"><rect x="0.5" y="0.5" width="13.6" height="12.8" fill="#50e0f0" stroke="#3050d0" stroke-width="1"/><path d="M2,10 C3,6.5 8,5 10.5,7 L12,8.5 L7,11.8 Z" fill="#f8f8ff" stroke="#404060" stroke-width="0.5"/><path d="M2,10 C3.5,8 6,8 7.5,9 L7,11.8 L3,11.8 Z" fill="#f0d040" stroke="#605010" stroke-width="0.5"/><path d="M7,11.8 L12,8.5 L12.4,9.6 L7.5,12.8 Z" fill="#2040a0"/></g>
<rect x="589.6" y="480.5" width="1.2" height="7" fill="#f6f6fc"/>
<g transform="translate(597,486.5) scale(1.0)"><path d="M3.5,0 V14.5 M5.8,0 V10 M0,8.2 H15.5 M0,10.4 H15.5 M0,12.8 h6" stroke="#282838" stroke-width="1"/><path d="M8.2,0.5 V8 M8.2,2 h2 M7.5,12.8 H15 M7.5,11.6 v2.4 M15,11.6 v2.4" stroke="#e02030" stroke-width="1.1"/></g>
<rect x="620.2" y="480.5" width="1.2" height="7" fill="#f6f6fc"/>
<g transform="translate(627.4,488) scale(1.0)"><rect x="0.3" y="2.3" width="15.6" height="8.8" rx="1" fill="#282830" stroke="#101018" stroke-width="0.5"/><rect x="5" y="0.3" width="5.6" height="2.6" fill="#383840"/><rect x="1.4" y="0.9" width="2.6" height="1.6" fill="#282830"/><circle cx="8" cy="6.9" r="3.3" fill="#585868" stroke="#c8c8d8" stroke-width="0.9"/><circle cx="8" cy="6.9" r="1.5" fill="#181820"/><rect x="12.2" y="3.4" width="2.6" height="1.5" fill="#d0d0e0"/><circle cx="7.8" cy="0.9" r="0.7" fill="#e8d020"/></g>
<rect x="650.6" y="480.5" width="1.2" height="7" fill="#f6f6fc"/>
<g transform="translate(658.8,486.5) scale(1.0)"><circle cx="2.6" cy="2.6" r="2.3" fill="#30b8d8" stroke="#105068" stroke-width="0.5"/><path d="M5.5,1.5 C9.5,0 12.5,2 12.5,5" fill="none" stroke="#e8d020" stroke-width="1.5"/><path d="M10.3,4.6 h4.6 l-2.3,3 Z" fill="#2040e0"/><path d="M1,8.5 L4.5,6.3 L14.8,7.3 L14.8,12.3 L11.5,14.8 L1,13.5 Z" fill="#f8f8ff" stroke="#101018" stroke-width="1.1"/><path d="M1,8.5 L11.5,9.8 L14.8,7.3 M11.5,9.8 V14.8 M2.5,11.8 h7.5" fill="none" stroke="#101018" stroke-width="1"/></g>
<g transform="translate(688.8,486) scale(1.0)"><path d="M1,2.8 H14.8" stroke="#2030c8" stroke-width="1.2"/><path d="M0,2.8 l3.4,-2.6 v5.2 Z M15.8,2.8 l-3.4,-2.6 v5.2 Z" fill="#2030c8"/><rect x="0.6" y="8.2" width="14.6" height="5.6" fill="#f8f8ff" stroke="#2840c8" stroke-width="1.1"/><path d="M3,8.8 v2.6 M5.4,8.8 v2.6 M7.8,8.8 v2.6 M10.2,8.8 v2.6 M12.6,8.8 v2.6" stroke="#e02030" stroke-width="0.9"/><path d="M1.2,13.2 h13.4" stroke="#e09080" stroke-width="0.8"/></g>
<g transform="translate(713.4,486) scale(1.0)"><path d="M4,0.8 L12,0.4 L12.4,14.6 L8.5,14.6 L8.5,11.5 L4,10.5 Z" fill="#303038" stroke="#101018" stroke-width="0.5"/><rect x="6.6" y="3" width="4" height="6" fill="#686878"/><circle cx="3.8" cy="6.2" r="3.3" fill="#2878d0" stroke="#101830" stroke-width="0.5"/><path d="M1,7.2 C2.5,8.6 5.5,8.4 6.8,6.5" stroke="#30c8b0" stroke-width="1.1" fill="none"/></g>
<g transform="translate(737,486) scale(1.0)"><circle cx="5" cy="2.4" r="1.9" fill="none" stroke="#101018" stroke-width="1.3"/><path d="M0.6,6.2 C0.6,4.4 9.4,4.4 9.4,6.2 V13 C9.4,15 0.6,15 0.6,13 Z" fill="#b0a018" stroke="#403808" stroke-width="0.6"/><path d="M2.2,6 V13.6" stroke="#e8e060" stroke-width="1.2"/><path d="M8.2,6 V13.6" stroke="#706008" stroke-width="1.2"/></g>
<rect x="757.8" y="480.5" width="1.2" height="7" fill="#f6f6fc"/>
<g transform="translate(765,486.5) scale(1.0)"><path d="M14.2,9.8 A6.4,6.2 0 1 0 6.2,13.4 M4.8,8.2 A3.3,3.1 0 1 1 10.8,9.6 C10,11 8,11.6 6.8,10.6" fill="none" stroke="#9c9cb0" stroke-width="3" stroke-linecap="round"/><path d="M14.2,9.8 A6.4,6.2 0 1 0 6.2,13.4 M4.8,8.2 A3.3,3.1 0 1 1 10.8,9.6 C10,11 8,11.6 6.8,10.6" fill="none" stroke="#f2f2fa" stroke-width="1.1" stroke-linecap="round"/></g>
<rect x="788.6" y="480.5" width="1.2" height="7" fill="#f6f6fc"/>
<g transform="translate(796,486) scale(1.0)"><ellipse cx="5" cy="5.5" rx="4.6" ry="3.6" transform="rotate(-30 5 5.5)" fill="#e0e0f0" stroke="#203060" stroke-width="0.8"/><path d="M2,9 L9.5,14.8 L15,12.5 L15,9.5 L8,5 Z" fill="#30b8d0" stroke="#103848" stroke-width="0.6"/><path d="M9.5,14.8 L15,12.5 L15,9.5 L9.5,11.5 Z" fill="#187890"/><path d="M10.5,0.5 l1.3,3.2 l3.5,0.2 l-2.7,2.2 l1,3.4 l-3.1,-2 l-3.1,2 l1,-3.4 l-2.7,-2.2 l3.5,-0.2 Z" fill="#f8d020" stroke="#e03818" stroke-width="0.9"/></g>
<g transform="translate(818,486) scale(1.0)"><circle cx="6" cy="5.5" r="5" fill="#d0d0e8" stroke="#203060" stroke-width="0.9"/><circle cx="6.5" cy="6" r="2.6" fill="#30b8d0"/><rect x="3" y="10.5" width="5" height="4" fill="#804050"/></g>
</svg>
<div id="tree"><div class="abs" style="left:0;top:77.1px;width:28.8px;height:11.2px;background:linear-gradient(#5a9cf4 0,#2a6cf0 1.3px,#0c54f0 2.2px,#0c54f0 100%)"></div>
<div id="r0" style="top:78.00px;left:-3.0px;transform:scaleX(0.9325);transform-origin:0 0"><span>e device</span></div>
<div id="r1" style="top:95.00px;left:1.2px;transform:scaleX(0.9058);transform-origin:0 0"><b>a</b><span>ca (placa.1)</span></div>
<div id="r2" style="top:111.00px;left:-0.5px;transform:scaleX(0.9252);transform-origin:0 0"><span>idaj_cama (ghidaj_cama.1)</span></div>
<div id="r3" style="top:128.00px;left:1.9px;transform:scaleX(0.9391);transform-origin:0 0"><b>r</b><span>ubM10x20 (surubM10x20.1)</span></div>
<div id="r4" style="top:144.00px;left:1.9px;transform:scaleX(0.9409);transform-origin:0 0"><b>r</b><span>ubM10x20 (surubM10x20.2)</span></div>
<div id="r5" style="top:160.00px;left:-1px;transform:scaleX(0.9449);transform-origin:0 0"><span>ft8x32 (stift8x32.1)</span></div>
<div id="r6" style="top:177.00px;left:-1px;transform:scaleX(0.9449);transform-origin:0 0"><span>ft8x32 (stift8x32.2)</span></div>
<div id="r7" style="top:193.00px;left:-0.5px;transform:scaleX(0.9415);transform-origin:0 0"><span>odesprijin (cepdesprijin.1)</span></div>
<div id="r8" style="top:210.00px;left:-0.5px;transform:scaleX(0.9415);transform-origin:0 0"><span>odesprijin (cepdesprijin.2)</span></div>
<div id="r9" style="top:226.00px;left:-0.5px;transform:scaleX(0.9143);transform-origin:0 0"><span>ezon (prezon.1)</span></div>
<div id="r10" style="top:242.00px;left:-2.0px;transform:scaleX(0.9606);transform-origin:0 0"><span>ulitaM16normala (piulitaM16normala.1)</span></div>
<div id="r11" style="top:259.00px;left:1.6px;transform:scaleX(0.8803);transform-origin:0 0"><b>e</b><span>sa (piesa.1)</span></div>
<div id="r12" style="top:275.00px;left:0.2px;transform:scaleX(0.9304);transform-origin:0 0"><span>da (brida.1)</span></div>
<div id="r13" style="top:292.00px;left:-0.3px;transform:scaleX(0.9336);transform-origin:0 0"><span>bacusuprafatasferica (saibacusuprafatasferica.1)</span></div>
<div id="r14" style="top:308.00px;left:-0.3px;transform:scaleX(0.9310);transform-origin:0 0"><span>baculocasconic (saibaculocasconic.1)</span></div>
<div id="r15" style="top:324.00px;left:-2.0px;transform:scaleX(0.9634);transform-origin:0 0"><span>ulitaM16ingusta (piulitaM16ingusta.1)</span></div>
<div id="r16" style="top:341.00px;left:-2.8px;transform:scaleX(0.9261);transform-origin:0 0"><span>ma (cama.1)</span></div>
<div id="r17" style="top:357.00px;left:0px;transform:scaleX(0.9897);transform-origin:0 0"><span>lt (bolt.1)</span></div>
<div id="r18" style="top:374.00px;left:-2.2px;transform:scaleX(0.9292);transform-origin:0 0"><span>aner (maner.1)</span></div>
<div id="r19" style="top:390.00px;left:-1.3px;transform:scaleX(0.9409);transform-origin:0 0"><span>ft5x20 (stift5x20.1)</span></div>
<div id="r20" style="top:406.00px;left:-1.2px;transform:scaleX(0.9080);transform-origin:0 0"><span>i (cui.1)</span></div>
<div id="r21" style="top:423.00px;left:-0.3px;transform:scaleX(0.7510);transform-origin:0 0"><span>束</span></div>
<div id="r22" style="top:439.00px;left:-2.2px;transform:scaleX(0.9671);transform-origin:0 0"><span>ations</span></div></div>
</body></html>
